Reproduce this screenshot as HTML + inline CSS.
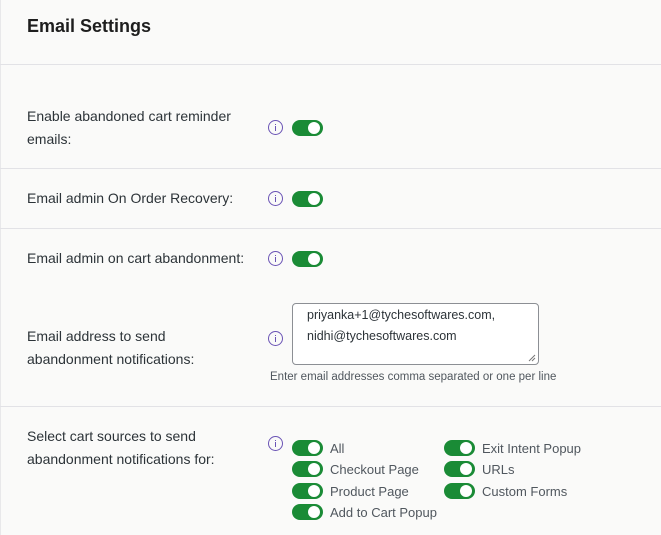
<!DOCTYPE html>
<html><head><style>
body{margin:0;width:661px;height:535px;background:#fafaf9;font-family:"Liberation Sans",sans-serif;color:#2c3338;position:relative;overflow:hidden}
.a{position:absolute}
h1{position:absolute;left:27px;top:16px;margin:0;font-size:18px;font-weight:bold;color:#1e1e1e}
.hr{position:absolute;left:0;width:661px;height:1px;background:#e2e2e6}
.lbl{position:absolute;left:27px;font-size:14px;line-height:23px;color:#2c3338}
.tg{position:absolute;width:31px;height:16px;border-radius:8px;background:#1a8b36}
.tg::after{content:"";position:absolute;right:3px;top:2px;width:12px;height:12px;border-radius:50%;background:#fff}
.ic{position:absolute;width:15px;height:15px;border:1.3px solid #6a53b5;border-radius:50%;box-sizing:border-box}
.ic::before{content:"";position:absolute;left:5.6px;top:2.8px;width:1.5px;height:1.5px;background:#6a53b5}
.ic::after{content:"";position:absolute;left:5.6px;top:5.4px;width:1.5px;height:5px;background:#6a53b5}
.t{position:absolute;font-size:13px;color:#50575e}
</style></head><body>
<div class="a" style="left:0;top:0;width:1px;height:535px;background:#e8e8ea"></div>
<h1>Email Settings</h1>
<div class="hr" style="top:64px"></div>
<div class="lbl" style="top:105px">Enable abandoned cart reminder<br>emails:</div>
<div class="ic" style="left:268px;top:120px"></div><div class="tg" style="left:292px;top:120px"></div>
<div class="hr" style="top:168px"></div>
<div class="lbl" style="top:187px">Email admin On Order Recovery:</div>
<div class="ic" style="left:268px;top:191px"></div><div class="tg" style="left:292px;top:191px"></div>
<div class="hr" style="top:228px"></div>
<div class="lbl" style="top:247px">Email admin on cart abandonment:</div>
<div class="ic" style="left:268px;top:251px"></div><div class="tg" style="left:292px;top:251px"></div>
<div class="hr" style="top:406px"></div>
<div class="lbl" style="top:325px">Email address to send<br>abandonment notifications:</div>
<div class="ic" style="left:268px;top:331px"></div>
<div class="a" style="left:292px;top:303px;width:247px;height:62px;border:1px solid #8c8f94;border-radius:4px;background:#fff;box-sizing:border-box;font-size:12.5px;color:#2c3338;line-height:21px;padding:1px 0 0 14px">priyanka+1@tychesoftwares.com,<br>nidhi@tychesoftwares.com
<svg class="a" style="right:2px;bottom:2px" width="8" height="8"><path d="M1 7L7 1M4 7L7 4" stroke="#777" stroke-width="1"/></svg></div>
<div class="a" style="left:270px;top:371px;font-size:11.5px;color:#50575e">Enter email addresses comma separated or one per line</div>
<div class="lbl" style="top:425px">Select cart sources to send<br>abandonment notifications for:</div>
<div class="ic" style="left:268px;top:436px"></div>
<div class="tg" style="left:292px;top:440px"></div><div class="t" style="left:330px;top:441px">All</div>
<div class="tg" style="left:292px;top:461px"></div><div class="t" style="left:330px;top:462px">Checkout Page</div>
<div class="tg" style="left:292px;top:483px"></div><div class="t" style="left:330px;top:484px">Product Page</div>
<div class="tg" style="left:292px;top:504px"></div><div class="t" style="left:330px;top:505px">Add to Cart Popup</div>
<div class="tg" style="left:444px;top:440px"></div><div class="t" style="left:482px;top:441px">Exit Intent Popup</div>
<div class="tg" style="left:444px;top:461px"></div><div class="t" style="left:482px;top:462px">URLs</div>
<div class="tg" style="left:444px;top:483px"></div><div class="t" style="left:482px;top:484px">Custom Forms</div>
</body></html>
